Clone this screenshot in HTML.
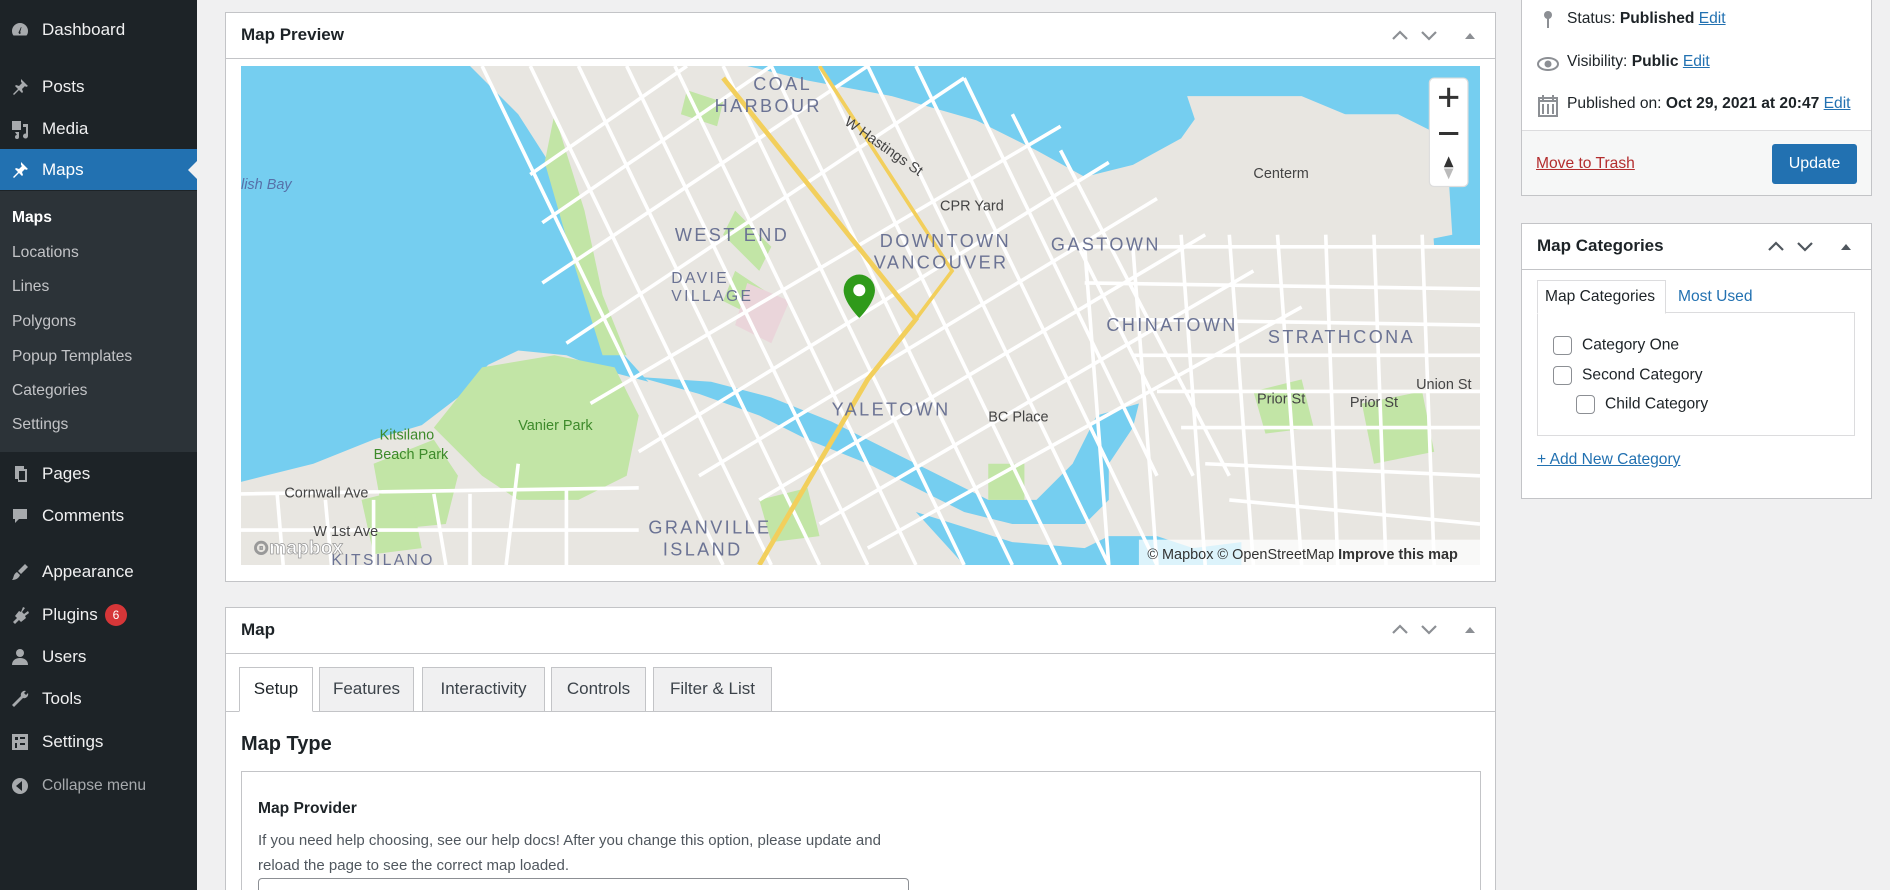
<!DOCTYPE html>
<html style="overflow:hidden;height:890px"><head><meta charset="utf-8"><style>
*{box-sizing:border-box;margin:0;padding:0}
body{width:1890px;height:890px;overflow:hidden;background:#f0f0f1;font-family:"Liberation Sans",sans-serif;color:#1d2327;position:relative;font-size:15.6px}
.sb{position:absolute;left:0;top:0;width:197px;height:890px;background:#1d2327}
.mi{position:absolute;left:0;width:197px;height:41px;color:#f0f0f1;font-size:17px;line-height:41px;padding-left:42px}
.mi .ic{position:absolute;left:10px;top:11px;width:20px;height:20px;color:#a7aaad}
.sub{position:absolute;left:0;top:191px;width:197px;height:261px;background:#2c3338}
.si{position:absolute;left:12px;font-size:15.6px;color:#c3c4c7}
.box{position:absolute;background:#fff;border:1px solid #c3c4c7;overflow:hidden}
.hd{height:45px;border-bottom:1px solid #c3c4c7;font-size:17px;font-weight:bold;padding:0 0 0 15px;line-height:44px;position:relative}
a{color:#2271b1;text-decoration:underline}
.tab{position:absolute;top:667px;height:45px;border:1px solid #c3c4c7;background:#f0f0f1;font-size:17px;line-height:42px;text-align:center;color:#3c434a}
.cb{display:inline-block;width:19px;height:19px;border:1px solid #8c8f94;border-radius:4px;vertical-align:middle;margin-right:10px;background:#fff}
</style></head><body>
<div class="sb">
 <div class="mi" style="top:9px">Dashboard<svg class="ic" viewBox="0 0 20 20"><path fill="#a7aaad" d="M10 3a8 8 0 0 0-8 8c0 2 .6 3.5 1.5 4.5h13c1-1 1.5-2.5 1.5-4.5a8 8 0 0 0-8-8zm0 11a1.5 1.5 0 0 1-1-2.6L11 7l.5.3-1.3 4.6A1.5 1.5 0 0 1 10 14z"/></svg></div>
 <div class="mi" style="top:66px">Posts<svg class="ic" viewBox="0 0 20 20"><path fill="#a7aaad" d="M11 2l7 7-2 1-1-1-3 3 1 3-1 1-3-3-5 5-1-1 5-5-3-3 1-1 3 1 3-3-1-1z"/></svg></div>
 <div class="mi" style="top:108px">Media<svg class="ic" viewBox="0 0 20 20"><path fill="#a7aaad" d="M2 2h9v9H2zM13 5h5v12a2.5 2.5 0 1 1-2-2.4V8h-3zM5 13h4v5a2 2 0 1 1-2-2z"/></svg></div>
 <div class="mi" style="top:149px;background:#2271b1;color:#fff">Maps<svg class="ic" viewBox="0 0 20 20"><path fill="#fff" d="M11 2l7 7-2 1-1-1-3 3 1 3-1 1-3-3-5 5-1-1 5-5-3-3 1-1 3 1 3-3-1-1z"/></svg><div style="position:absolute;right:0;top:12px;width:0;height:0;border:9px solid transparent;border-right-color:#f0f0f1"></div></div>
 <div class="sub">
  <div class="si" style="top:18px;color:#fff;font-weight:bold">Maps</div>
  <div class="si" style="top:53px">Locations</div>
  <div class="si" style="top:87px">Lines</div>
  <div class="si" style="top:122px">Polygons</div>
  <div class="si" style="top:157px">Popup Templates</div>
  <div class="si" style="top:191px">Categories</div>
  <div class="si" style="top:225px">Settings</div>
 </div>
 <div class="mi" style="top:453px">Pages<svg class="ic" viewBox="0 0 20 20"><path fill="#a7aaad" d="M5 2h9v3h3v13H8v-3H5zM9 7v9h6V7z"/></svg></div>
 <div class="mi" style="top:495px">Comments<svg class="ic" viewBox="0 0 20 20"><path fill="#a7aaad" d="M3 3h14v10H9l-4 4v-4H3z"/></svg></div>
 <div class="mi" style="top:551px">Appearance<svg class="ic" viewBox="0 0 20 20"><path fill="#a7aaad" d="M15 2l3 3-7 7-3-3zM7 10l3 3c-1 3-4 5-8 5 2-2 1-6 5-8z"/></svg></div>
 <div class="mi" style="top:594px">Plugins<span style="position:absolute;left:105px;top:10px;width:22px;height:22px;border-radius:11px;background:#d63638;color:#fff;font-size:12px;line-height:22px;text-align:center">6</span><svg class="ic" viewBox="0 0 20 20"><path fill="#a7aaad" d="M13 2l2 1-3 4 2 2 4-3 1 2-4 3 1 2-5 4-2-2-4 4-2-2 4-4-2-2 4-5 2 1z"/></svg></div>
 <div class="mi" style="top:636px">Users<svg class="ic" viewBox="0 0 20 20"><circle cx="10" cy="6" r="4" fill="#a7aaad"/><path fill="#a7aaad" d="M2 18c0-5 4-7 8-7s8 2 8 7z"/></svg></div>
 <div class="mi" style="top:678px">Tools<svg class="ic" viewBox="0 0 20 20"><path fill="#a7aaad" d="M16 2a4 4 0 0 0-5 5L2 16l2 2 9-9a4 4 0 0 0 5-5l-2 2-2-2z"/></svg></div>
 <div class="mi" style="top:721px">Settings<svg class="ic" viewBox="0 0 20 20"><path fill="#a7aaad" d="M2 2h16v16H2zm3 3v3h3V5zm0 6v5h2v-5zm5-6v2h5V5zm0 6v2h5v-2z"/></svg></div>
 <div class="mi" style="top:765px;font-size:15.6px;color:#a7aaad">Collapse menu<svg class="ic" viewBox="0 0 20 20"><circle cx="10" cy="10" r="8" fill="#a7aaad"/><path fill="#1d2327" d="M12 5v10l-6-5z"/></svg></div>
</div>

<div class="box" style="left:225px;top:12px;width:1271px;height:570px">
 <div class="hd" style="height:46px">Map Preview</div>
</div>
<svg style="position:absolute;left:1389px;top:26px" width="100" height="20" viewBox="0 0 100 20"><path d="M4 13l7-7 7 7M33 6l7 7 7-7" stroke="#8c8f94" stroke-width="2.2" fill="none"/><path d="M76 13l5-6 5 6z" fill="#8c8f94"/></svg>

<svg style="position:absolute;left:241px;top:66px" width="1239" height="499" viewBox="0 0 1028 414" preserveAspectRatio="none">
 <rect width="1028" height="414" fill="#e8e6e1"/>
 <path fill="#75cef0" d="M0 0H190L230 40L262 90L282 150L298 200L318 240L338 262L300 252L270 240L230 236L205 248L180 275L150 298L110 310L60 330L20 340L0 345Z"/>
 <path fill="#75cef0" d="M330 258L380 272L430 290L470 310L520 330L560 350L600 370L640 380L700 380L720 360L720 330L740 300L745 280L710 290L690 330L660 360L620 360L580 340L540 320L490 295L440 275L390 262Z"/>
 <path fill="#75cef0" d="M560 370L600 414H830L830 395L790 400L760 390L720 390L700 400L640 395Z"/>
 <path fill="#75cef0" d="M420 0H1028V150H990L985 85L960 60L900 40L860 28L800 32L780 60L740 82L700 92L660 70L610 45L540 25L470 12Z"/>
 <path fill="#e8e6e1" d="M785 25L880 25L940 50L960 70L960 110L900 100L850 90L800 70Z"/>
 <path fill="#e8e6e1" d="M890 40L960 40L1000 60L1005 140L980 145Z"/>
 <g fill="#c2e5a6">
  <path d="M160 300L200 250L260 240L310 250L330 290L320 340L280 360L230 360L200 340Z"/>
  <path d="M110 330L160 310L180 340L170 380L120 385Z"/>
  <path d="M260 40L285 120L300 190L320 240L300 240L275 160L252 80Z"/>
  <path d="M410 120L440 150L430 170L400 140Z"/><path d="M410 170L440 190L430 210L400 195Z"/>
  <path d="M930 280L980 270L990 320L940 330Z"/><path d="M840 270L880 260L890 300L850 305Z"/>
  <path d="M620 330L650 330L650 360L620 360Z"/><path d="M430 360L470 350L480 390L440 395Z"/>
  <path d="M100 360L140 350L150 400L110 405Z"/><path d="M370 20L400 30L395 50L365 40Z"/>
 </g>
 <path fill="#ead5da" d="M420 180L455 195L440 230L410 215Z"/>
 <g stroke="#ffffff" stroke-width="3" fill="none">
  <path d="M200 0L400 414M240 0L440 414M280 0L480 414M320 0L520 414M360 0L560 414M400 0L600 414M440 0L640 414M480 0L680 414M520 0L720 414M560 0L760 414M600 10L760 340M640 40L790 340M680 70L820 340"/>
  <path d="M250 180L520 0M270 230L600 10M290 280L680 50M330 320L720 80M380 340L760 110M430 360L800 140M480 380L840 170M520 400L880 200M250 130L440 0M240 90L370 0"/>
  <path d="M680 150L1028 150M700 180L1028 185M720 210L1028 215M740 240L1028 240M760 270L1028 270M780 300L1028 300M800 330L1028 340M820 360L1028 380"/>
  <path d="M700 150L720 414M740 150L760 414M780 140L800 414M820 140L840 414M860 140L880 414M900 140L910 414M940 140L950 414M980 140L990 414"/>
  <path d="M0 355L330 350M0 385L330 385M30 355L35 414M70 360L75 414M110 360L110 414M160 355L170 414M190 355L190 414M230 330L220 414M270 350L270 414"/>
 </g>
 <path d="M400 10L560 210L520 260L430 414" stroke="#f2cf5c" stroke-width="4" fill="none"/>
 <path d="M560 210L590 170L480 0" stroke="#f2cf5c" stroke-width="3" fill="none"/>
 <g font-family="Liberation Sans" font-size="15" fill="#6b7394" letter-spacing="2">
  <text x="425" y="20">COAL</text><text x="393" y="38">HARBOUR</text>
  <text x="360" y="145">WEST END</text><text x="530" y="150">DOWNTOWN</text><text x="525" y="168">VANCOUVER</text>
  <text x="672" y="153">GASTOWN</text><text x="718" y="220">CHINATOWN</text><text x="852" y="230">STRATHCONA</text>
  <text x="490" y="290">YALETOWN</text><text x="338" y="388">GRANVILLE</text><text x="350" y="406">ISLAND</text>
  <text x="357" y="180" font-size="13">DAVIE</text><text x="357" y="195" font-size="13">VILLAGE</text>
  <text x="75" y="414" font-size="13">KITSILANO</text>
 </g>
 <g font-family="Liberation Sans" font-size="12" fill="#444">
  <text x="36" y="358">Cornwall Ave</text><text x="60" y="390">W 1st Ave</text>
  <text x="500" y="48" transform="rotate(35 500 48)">W Hastings St</text>
  <text x="580" y="120">CPR Yard</text><text x="840" y="93">Centerm</text><text x="620" y="295">BC Place</text>
  <text x="843" y="280">Prior St</text><text x="920" y="283">Prior St</text><text x="975" y="268">Union St</text>
 </g>
 <g font-family="Liberation Sans" font-size="12" fill="#3d8a2a"><text x="230" y="302">Vanier Park</text><text x="115" y="310">Kitsilano</text><text x="110" y="326">Beach Park</text></g>
 <text x="0" y="102" font-family="Liberation Sans" font-size="12" font-style="italic" fill="#5670a8">lish Bay</text>
 <path d="M513 173a13 13 0 0 0-13 13c0 10 13 23 13 23s13-13 13-23a13 13 0 0 0-13-13z" fill="#2f9a1a"/><circle cx="513" cy="186" r="5" fill="#fff"/>
 <rect x="745" y="393" width="283" height="21" fill="#fff" opacity=".75"/>
 <text x="752" y="409" font-family="Liberation Sans" font-size="12" fill="#333">© Mapbox © OpenStreetMap <tspan font-weight="bold">Improve this map</tspan></text>
 <text x="10" y="405" font-family="Liberation Sans" font-size="16" font-weight="bold" fill="#fff" stroke="#999" stroke-width=".6">⊙mapbox</text>
 <rect x="986" y="10" width="32" height="90" rx="4" fill="#fff" stroke="#ddd"/>
 <path d="M994 26h16M1002 18v16M994 56h16" stroke="#333" stroke-width="2.5"/><path d="M1002 75l-4 9h8z" fill="#333"/><path d="M1002 94l-4-9h8z" fill="#bbb"/>
</svg>

<div class="box" style="left:225px;top:607px;width:1271px;height:283px;border-bottom:none">
 <div class="hd" style="height:46px">Map</div>
 <div style="position:absolute;left:0;top:103px;width:1269px;border-top:1px solid #c3c4c7"></div>
 <div style="position:absolute;left:15px;top:125px;font-size:20px;font-weight:bold">Map Type</div>
 <div style="position:absolute;left:15px;top:163px;width:1240px;height:119px;border:1px solid #c3c4c7;border-bottom:none">
  <div style="position:absolute;left:16px;top:28px;font-weight:bold;font-size:15.6px">Map Provider</div>
  <div style="position:absolute;left:16px;top:56px;font-size:15px;color:#50575e;line-height:25px;width:660px">If you need help choosing, see our help docs! After you change this option, please update and reload the page to see the correct map loaded.</div>
  <div style="position:absolute;left:16px;top:106px;width:651px;height:12px;border:1px solid #8c8f94;border-bottom:none;border-radius:4px 4px 0 0"></div>
 </div>
</div>
<svg style="position:absolute;left:1389px;top:620px" width="100" height="20" viewBox="0 0 100 20"><path d="M4 13l7-7 7 7M33 6l7 7 7-7" stroke="#8c8f94" stroke-width="2.2" fill="none"/><path d="M76 13l5-6 5 6z" fill="#8c8f94"/></svg>
<div class="tab" style="left:239px;width:74px;background:#fff;border-bottom-color:#fff;color:#1d2327;z-index:2">Setup</div>
<div class="tab" style="left:319px;width:95px">Features</div>
<div class="tab" style="left:422px;width:123px">Interactivity</div>
<div class="tab" style="left:551px;width:95px">Controls</div>
<div class="tab" style="left:653px;width:119px">Filter &amp; List</div>

<div class="box" style="left:1521px;top:-5px;width:351px;height:201px;">
 <div style="position:absolute;left:45px;top:14px">Status: <b>Published</b> <a>Edit</a></div>
 <div style="position:absolute;left:45px;top:57px">Visibility: <b>Public</b> <a>Edit</a></div>
 <div style="position:absolute;left:45px;top:99px">Published on: <b>Oct 29, 2021 at 20:47</b> <a>Edit</a></div>
 <svg style="position:absolute;left:14px;top:10px" width="24" height="115" viewBox="0 0 24 115"><circle cx="12" cy="9" r="4" fill="#8c8f94"/><rect x="11" y="9" width="2" height="13" fill="#8c8f94"/><ellipse cx="12" cy="58" rx="10" ry="6" fill="none" stroke="#8c8f94" stroke-width="2"/><circle cx="12" cy="58" r="3.5" fill="#8c8f94"/><rect x="3" y="92" width="18" height="18" fill="none" stroke="#8c8f94" stroke-width="2"/><path d="M3 95h18M7 98v10M12 98v10M17 98v10M7 89v5M17 89v5" stroke="#8c8f94" stroke-width="2"/></svg>
 <div style="position:absolute;left:0;top:134px;width:349px;height:66px;background:#f6f7f7;border-top:1px solid #dcdcde">
  <a style="position:absolute;left:14px;top:24px;color:#b32d2e">Move to Trash</a>
  <div style="position:absolute;left:250px;top:13px;width:85px;height:40px;background:#2271b1;border-radius:3px;color:#fff;text-align:center;line-height:40px;font-size:16px">Update</div>
 </div>
</div>

<div class="box" style="left:1521px;top:223px;width:351px;height:276px">
 <div class="hd" style="height:46px">Map Categories</div>
 <svg style="position:absolute;left:243px;top:13px" width="100" height="20" viewBox="0 0 100 20"><path d="M4 13l7-7 7 7M33 6l7 7 7-7" stroke="#50575e" stroke-width="2.2" fill="none"/><path d="M76 13l5-6 5 6z" fill="#50575e"/></svg>
 <div style="position:absolute;left:15px;top:88px;width:318px;height:124px;border:1px solid #dcdcde"></div>
 <div style="position:absolute;left:15px;top:56px;width:129px;height:34px;border:1px solid #dcdcde;border-bottom:1px solid #fff;background:#fff;line-height:32px;padding-left:7px;font-size:15.6px">Map Categories</div>
 <div style="position:absolute;left:156px;top:56px;line-height:34px;color:#2271b1">Most Used</div>
 <div style="position:absolute;left:31px;top:112px"><span class="cb"></span>Category One</div>
 <div style="position:absolute;left:31px;top:142px"><span class="cb"></span>Second Category</div>
 <div style="position:absolute;left:54px;top:171px"><span class="cb"></span>Child Category</div>
 <a style="position:absolute;left:15px;top:227px;font-size:15.6px">+ Add New Category</a>
</div>
</body></html>
